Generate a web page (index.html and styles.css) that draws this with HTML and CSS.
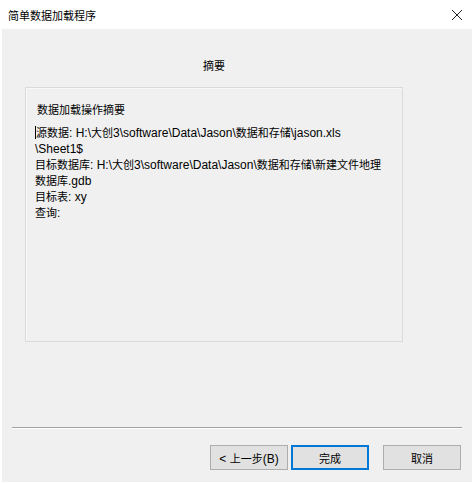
FILE: index.html
```html
<!DOCTYPE html>
<html lang="zh-CN">
<head>
    <meta charset="UTF-8">
    <title>简单数据加载程序</title>
    <link rel="stylesheet" href="styles.css">
</head>
<body>
    <div class="window">
        <div class="titlebar">
            <span class="title">简单数据加载程序</span>
            <svg class="close" width="12" height="12" viewBox="0 0 12 12">
                <path d="M1 1L11 11M11 1L1 11" stroke="#222" stroke-width="1" fill="none"/>
            </svg>
        </div>
        <div class="content">
            <div class="page-head">摘要</div>
            <div class="summary">
                <div class="summary-title">数据加载操作摘要</div>
                <div class="summary-text">
                    <span class="caret"></span><span class="zh">源数据</span>: H:\<span class="zh">大创</span>3\software\Data\Jason\<span class="zh">数据和存储</span>\jason.xls<br>
                    \Sheet1$<br>
                    <span class="zh">目标数据库</span>: H:\<span class="zh">大创</span>3\software\Data\Jason\<span class="zh">数据和存储</span>\<span class="zh">新建文件地理</span><br>
                    <span class="zh">数据库</span>.gdb<br>
                    <span class="zh">目标表</span>: xy<br>
                    <span class="zh">查询</span>:
                </div>
            </div>
            <div class="spacer"></div>
            <div class="separator"></div>
            <div class="buttons">
                <button class="btn">&lt; <span class="zh">上一步</span>(B)</button>
                <button class="btn btn-default">完成</button>
                <button class="btn btn-cancel">取消</button>
            </div>
        </div>
    </div>
</body>
</html>
```

FILE: styles.css
```css
* {
    margin: 0;
    padding: 0;
    box-sizing: border-box;
}

body {
    background: #fff;
    font-family: "Liberation Sans", "Noto Sans CJK SC", sans-serif;
    font-size: 12px;
    color: #000;
}

.zh {
    font-size: 11px;
}

.window {
    width: 474px;
    height: 484px;
    display: flex;
    flex-direction: column;
}

.titlebar {
    height: 29px;
    display: flex;
    align-items: center;
    justify-content: space-between;
    padding: 0 11px 0 8px;
    background: #fff;
}

.title {
    font-size: 11px;
    color: #000;
}

.content {
    flex: 1;
    margin: 0 2px 2px;
    background: #f0f0f0;
    display: flex;
    flex-direction: column;
    padding-top: 29px;
}

.page-head {
    width: 378px;
    margin-left: 23px;
    text-align: center;
    font-size: 11px;
    line-height: 16px;
}

.summary {
    margin: 13px 0 0 23px;
    width: 378px;
    height: 255px;
    border: 1px solid #dadada;
    box-shadow: inset 1px 1px 0 #f8f8f8;
    padding: 14px 0 0 11px;
}

.summary-title {
    font-size: 11px;
    line-height: 16px;
}

.summary-text {
    margin-top: 7px;
    margin-left: -2px;
    line-height: 16px;
    white-space: nowrap;
}

.caret {
    display: inline-block;
    width: 1px;
    height: 13px;
    background: #000;
    vertical-align: -2px;
}

.spacer {
    flex: 1;
}

.separator {
    margin: 0 10px;
    height: 2px;
    border-top: 1px solid #a0a0a0;
    border-bottom: 1px solid #fff;
}

.buttons {
    display: flex;
    justify-content: flex-end;
    gap: 3px;
    padding: 16px 11px 12px 0;
}

.btn {
    width: 78px;
    height: 25px;
    background: #e1e1e1;
    border: 1px solid #adadad;
    font-family: "Liberation Sans", "Noto Sans CJK SC", sans-serif;
    font-size: 12px;
    color: #000;
}

.btn-default,
.btn-cancel {
    font-size: 11px;
}

.btn-default {
    border: 2px solid #0078d7;
}

.btn-cancel {
    margin-left: 11px;
}
```
